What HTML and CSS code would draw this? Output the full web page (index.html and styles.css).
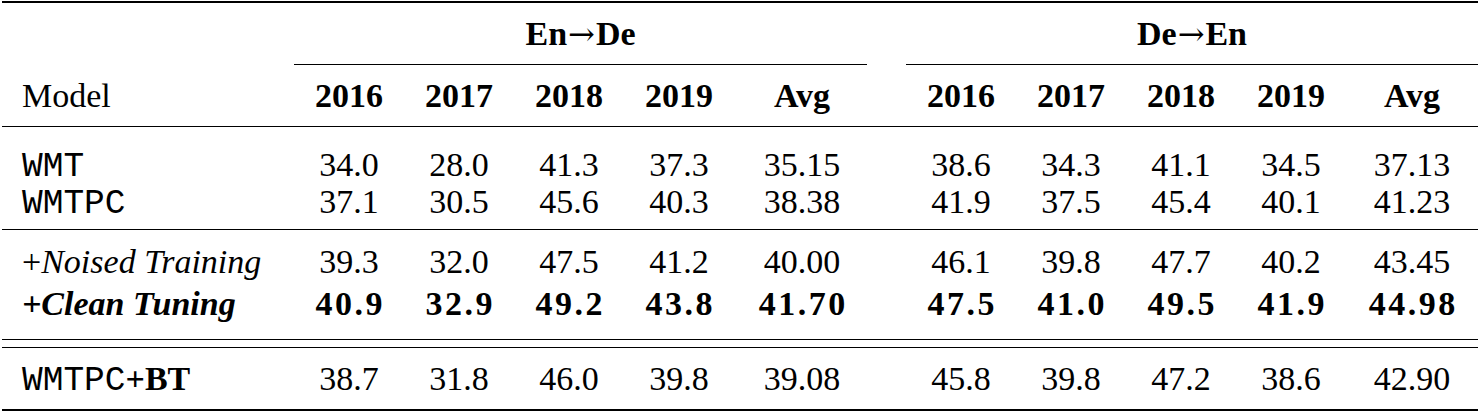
FILE: index.html
```html
<!DOCTYPE html>
<html>
<head>
<meta charset="utf-8">
<link rel="stylesheet" href="styles.css">
</head>
<body>
<div class="results">
  <div class="rule rule-thick"></div>
  <div class="row row-group">
    <div class="cell"></div>
    <div class="cell grp grp-en">En<span class="arr">→</span>De</div>
    <div class="cell"></div>
    <div class="cell grp grp-de">De<span class="arr">→</span>En</div>
  </div>
  <div class="row row-head">
    <div class="cell model">Model</div>
    <div class="cell hd">2016</div>
    <div class="cell hd">2017</div>
    <div class="cell hd">2018</div>
    <div class="cell hd">2019</div>
    <div class="cell hd">Avg</div>
    <div class="cell"></div>
    <div class="cell hd">2016</div>
    <div class="cell hd">2017</div>
    <div class="cell hd">2018</div>
    <div class="cell hd">2019</div>
    <div class="cell hd">Avg</div>
  </div>
  <div class="rule rule-mid"></div>
  <div class="row row-wmt">
    <div class="cell model"><span class="tt">WMT</span></div>
    <div class="cell">34.0</div>
    <div class="cell">28.0</div>
    <div class="cell">41.3</div>
    <div class="cell">37.3</div>
    <div class="cell">35.15</div>
    <div class="cell"></div>
    <div class="cell">38.6</div>
    <div class="cell">34.3</div>
    <div class="cell">41.1</div>
    <div class="cell">34.5</div>
    <div class="cell">37.13</div>
  </div>
  <div class="row row-wmtpc">
    <div class="cell model"><span class="tt">WMTPC</span></div>
    <div class="cell">37.1</div>
    <div class="cell">30.5</div>
    <div class="cell">45.6</div>
    <div class="cell">40.3</div>
    <div class="cell">38.38</div>
    <div class="cell"></div>
    <div class="cell">41.9</div>
    <div class="cell">37.5</div>
    <div class="cell">45.4</div>
    <div class="cell">40.1</div>
    <div class="cell">41.23</div>
  </div>
  <div class="rule rule-mid"></div>
  <div class="row row-noised">
    <div class="cell model">+<em>Noised Training</em></div>
    <div class="cell">39.3</div>
    <div class="cell">32.0</div>
    <div class="cell">47.5</div>
    <div class="cell">41.2</div>
    <div class="cell">40.00</div>
    <div class="cell"></div>
    <div class="cell">46.1</div>
    <div class="cell">39.8</div>
    <div class="cell">47.7</div>
    <div class="cell">40.2</div>
    <div class="cell">43.45</div>
  </div>
  <div class="row row-clean">
    <div class="cell model bi">+Clean Tuning</div>
    <div class="cell b">40.9</div>
    <div class="cell b">32.9</div>
    <div class="cell b">49.2</div>
    <div class="cell b">43.8</div>
    <div class="cell b">41.70</div>
    <div class="cell"></div>
    <div class="cell b">47.5</div>
    <div class="cell b">41.0</div>
    <div class="cell b">49.5</div>
    <div class="cell b">41.9</div>
    <div class="cell b">44.98</div>
  </div>
  <div class="rule rule-double"></div>
  <div class="row row-bt">
    <div class="cell model"><span class="tt">WMTPC</span><strong>+BT</strong></div>
    <div class="cell">38.7</div>
    <div class="cell">31.8</div>
    <div class="cell">46.0</div>
    <div class="cell">39.8</div>
    <div class="cell">39.08</div>
    <div class="cell"></div>
    <div class="cell">45.8</div>
    <div class="cell">39.8</div>
    <div class="cell">47.2</div>
    <div class="cell">38.6</div>
    <div class="cell">42.90</div>
  </div>
  <div class="rule rule-thick"></div>
</div>
</body>
</html>
```
FILE: styles.css
```css
html, body {
  margin: 0;
  padding: 0;
  background: #fff;
}

.results {
  margin: 1px 0 0 2px;
  width: 1476px;
  display: flex;
  flex-direction: column;
  color: #000;
  font-family: "Liberation Serif", Tinos, "Times New Roman", Times, "Nimbus Roman", "Nimbus Roman No9 L", "Noto Serif", "DejaVu Serif", serif;
  font-size: 34px;
}

.cell {
  line-height: 37px;
  text-align: center;
  white-space: nowrap;
}

.rule {
  background: #000;
}
.rule-thick { height: 2px; }
.rule-mid { height: 1px; }
.rule-double {
  height: 7px;
  background: #fff;
  border-top: 1px solid #000;
  border-bottom: 1px solid #000;
}

.row {
  display: grid;
  grid-template-columns: 292px 110px 110px 110px 110px 136px 36px 110px 110px 110px 110px 132px;
}

.model {
  text-align: left;
  padding-left: 20px;
}

.tt {
  font-family: "Liberation Mono", Cousine, "Courier New", Courier, "Nimbus Mono PS", "DejaVu Sans Mono", monospace;
  font-size: 34.5px;
  line-height: 0;
}

.grp {
  grid-column: span 5;
  font-weight: bold;
  padding-top: 12px;
  padding-bottom: 12px;
  border-bottom: 1px solid #000;
}
.grp-en { margin-right: 3px; }
.arr {
  font-family: "DejaVu Serif", "DejaVu Sans", serif;
  font-weight: normal;
  font-size: 32px;
  line-height: 0;
  padding: 0 1px;
}

.row-group .cell { padding-top: 12px; }
.row-group .cell:not(.grp) { padding-bottom: 13px; }

.row-head .cell { padding-top: 12px; padding-bottom: 12px; }
.hd { font-weight: bold; }

.row-wmt .cell { padding-top: 19px; }
.row-wmtpc .cell { padding-bottom: 9px; }
.row-noised .cell { padding-top: 13px; }
.row-clean .cell { padding-top: 5px; padding-bottom: 17px; }
.row-bt .cell { padding-top: 12px; padding-bottom: 12px; }

em { font-style: italic; }
.bi { font-weight: bold; font-style: italic; }
.b { font-weight: bold; letter-spacing: 0.075em; text-indent: 0.075em; }
strong { font-weight: bold; }
```
